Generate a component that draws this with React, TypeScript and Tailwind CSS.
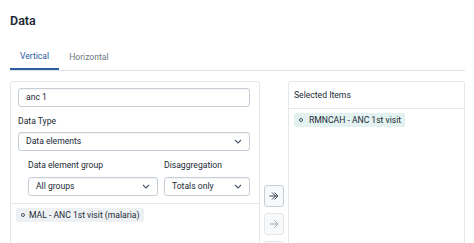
import React from 'react';

const Chevron = () => (
  <svg width="8" height="5" viewBox="0 0 8 5" className="shrink-0">
    <path d="M1 1 L4 4 L7 1" fill="none" stroke="#4a5768" strokeWidth="1.1" />
  </svg>
);

const Select = ({ label, className }: { label: string; className?: string }) => (
  <div
    className={`h-[19px] flex items-center justify-between border border-[#c6cfd8] rounded-[3px] bg-white pl-[7px] pr-[7px] shadow-[inset_0_1px_1px_rgba(0,0,0,0.05)] ${className ?? ''}`}
  >
    <span className="text-[8.6px] leading-[11px] text-[#212934]">{label}</span>
    <Chevron />
  </div>
);

const Bullet = () => (
  <span className="w-[4px] h-[4px] rounded-full border border-[#4a5768] shrink-0" />
);

const DoubleArrow = () => (
  <svg width="12" height="10" viewBox="0 0 12 10">
    <path d="M1.5 5 H10" stroke="#404b5a" strokeWidth="1" fill="none" />
    <path d="M6.5 1.5 L10 5 L6.5 8.5" stroke="#404b5a" strokeWidth="1" fill="none" />
    <path d="M4 1.5 L7.5 5 L4 8.5" stroke="#404b5a" strokeWidth="1" fill="none" />
  </svg>
);

const Arrow = ({ color }: { color: string }) => (
  <svg width="12" height="10" viewBox="0 0 12 10">
    <path d="M2 5 H10" stroke={color} strokeWidth="1" fill="none" />
    <path d="M6.5 1.5 L10 5 L6.5 8.5" stroke={color} strokeWidth="1" fill="none" />
  </svg>
);

export default function App() {
  return (
    <div className="w-[474px] h-[243px] overflow-hidden bg-white font-['Roboto',sans-serif] text-[#212934]">
      <div className="pl-[10px] pr-[9px]">
        <h1 className="pt-[13px] text-[12.5px] leading-[15px] font-semibold">Data</h1>

        {/* tabs */}
        <div className="mt-[17px] flex border-b border-[#dfe4ea]">
          <div className="h-[25px] px-[10px] flex items-center -mb-px border-b-[2px] border-[#2c5b9e] text-[8.6px] text-[#2c5b9e]">
            Vertical
          </div>
          <div className="h-[25px] px-[10px] flex items-center text-[8.6px] text-[#6b7785]">
            Horizontal
          </div>
        </div>

        {/* transfer */}
        <div className="mt-[10px] flex gap-[4px]">
          {/* left panel */}
          <div className="w-[250px] h-[200px] shrink-0 border border-[#e3e8ed] rounded-[3px] flex flex-col">
            <div className="pt-[6px] pl-[7px] pr-[9px] pb-[7px] border-b border-[#e3e8ed]">
              <div className="h-[19px] flex items-center border border-[#c6cfd8] rounded-[3px] pl-[7px] text-[8.6px] shadow-[inset_0_1px_1px_rgba(0,0,0,0.05)]">
                anc 1
              </div>
              <div className="mt-[9px] text-[8.6px] leading-[11px]">Data Type</div>
              <Select label="Data elements" className="mt-[5px]" />
              <div className="pl-[10px] flex gap-[6px]">
                <div className="w-[130px]">
                  <div className="mt-[9px] text-[8.6px] leading-[11px]">Data element group</div>
                  <Select label="All groups" className="mt-[6px]" />
                </div>
                <div className="flex-1">
                  <div className="mt-[9px] text-[8.6px] leading-[11px]">Disaggregation</div>
                  <Select label="Totals only" className="mt-[6px]" />
                </div>
              </div>
            </div>
            <div className="pt-[4px] pl-[5px] flex">
              <div className="flex items-center gap-[4px] h-[14px] pl-[5px] pr-[5px] bg-[#eef1f4] rounded-[2px] text-[8.6px] leading-[11px]">
                <Bullet />
                <span>MAL - ANC 1st visit (malaria)</span>
              </div>
            </div>
          </div>

          {/* buttons */}
          <div className="pt-[104px] flex flex-col gap-[6px]">
            <button className="w-[20px] h-[22px] flex items-center justify-center border border-[#c6cfd8] rounded-[3px] bg-[#f8f9fa]">
              <DoubleArrow />
            </button>
            <button className="w-[20px] h-[22px] flex items-center justify-center border border-[#e3e8ed] rounded-[3px] bg-[#f8f9fa]">
              <Arrow color="#9aa5b1" />
            </button>
            <button className="w-[20px] h-[22px] flex items-center justify-center border border-[#e3e8ed] rounded-[3px] bg-[#f8f9fa]" />
          </div>

          {/* right panel */}
          <div className="w-[177px] h-[200px] shrink-0 border border-[#e3e8ed] rounded-[3px] flex flex-col">
            <div className="h-[27px] flex items-center pl-[5px] border-b border-[#e3e8ed] text-[8.6px]">
              Selected Items
            </div>
            <div className="pt-[4px] pl-[5px] flex">
              <div className="flex items-center gap-[6px] h-[14px] pl-[5px] pr-[4px] bg-[#e3f2f0] rounded-[2px] text-[8.6px] leading-[11px]">
                <Bullet />
                <span>RMNCAH - ANC 1st visit</span>
              </div>
            </div>
          </div>
        </div>
      </div>
    </div>
  );
}
